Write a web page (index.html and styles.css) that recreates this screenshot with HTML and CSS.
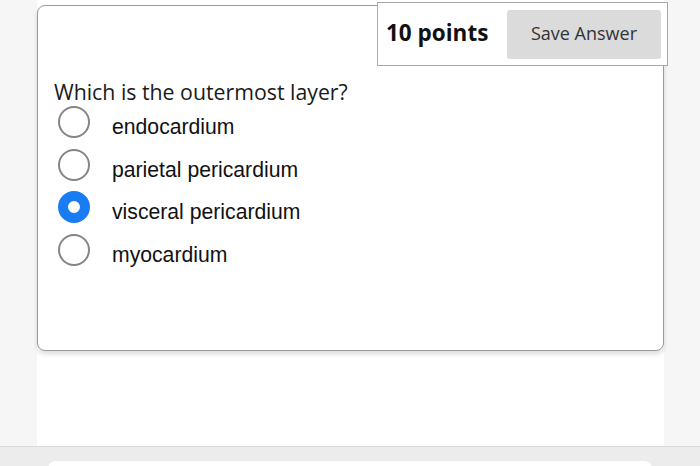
FILE: index.html
```html
<!DOCTYPE html>
<html>
<head>
<meta charset="utf-8">
<link rel="stylesheet" href="styles.css">
</head>
<body>
<div class="page">
  <div class="column">
    <div class="card">
      <div class="points-box">
        <span class="points">10 points</span>
        <button class="save">Save Answer</button>
      </div>
      <p class="question">Which is the outermost layer?</p>
      <ul class="options">
        <li class="option"><span class="radio"></span><span class="label">endocardium</span></li>
        <li class="option"><span class="radio"></span><span class="label">parietal pericardium</span></li>
        <li class="option"><span class="radio checked"></span><span class="label">visceral pericardium</span></li>
        <li class="option"><span class="radio"></span><span class="label">myocardium</span></li>
      </ul>
    </div>
  </div>
  <div class="bottom-bar"><div class="tab"></div></div>
</div>
</body>
</html>
```
FILE: styles.css
```css
html, body {
  margin: 0;
  padding: 0;
}
body {
  background: #f6f6f6;
  width: 700px;
  height: 466px;
  overflow: hidden;
}
.page {
  display: flex;
  flex-direction: column;
  height: 466px;
}
.column {
  margin-left: 37px;
  width: 627px;
  height: 447px;
  background: #ffffff;
  padding-top: 5px;
  box-sizing: border-box;
}
.card {
  position: relative;
  height: 346px;
  box-sizing: border-box;
  border: 1.5px solid #9a9a9a;
  border-radius: 8px;
  background: #fff;
  box-shadow: 0 3px 5px rgba(0,0,0,0.14);
  padding: 72px 0 0 16px;
}
.points-box {
  position: absolute;
  top: -4px;
  right: -5px;
  width: 291px;
  height: 64px;
  box-sizing: border-box;
  border: 1.5px solid #a8a8a8;
  background: #fff;
  display: flex;
  align-items: center;
  padding: 0 6px 0 8px;
  justify-content: space-between;
}
.points {
  font-family: "Open Sans", sans-serif;
  font-weight: 700;
  font-size: 22.5px;
  color: #111;
  margin-bottom: 4px;
}
.save {
  width: 154px;
  height: 49px;
  border: none;
  border-radius: 3px;
  background: #dbdbdb;
  font-family: "Open Sans", sans-serif;
  font-size: 18px;
  color: #333;
  padding: 0 0 3px 0;
}
.question {
  margin: 0;
  font-family: "Open Sans", sans-serif;
  font-size: 21.3px;
  line-height: 28px;
  color: #1a1a1a;
}
.options {
  list-style: none;
  margin: 0;
  padding: 0 0 0 4px;
}
.option {
  display: flex;
  align-items: center;
  height: 42.5px;
  gap: 22px;
}
.radio {
  width: 32px;
  height: 32px;
  box-sizing: border-box;
  border: 2.8px solid #858585;
  border-radius: 50%;
  background: #fff;
  flex: none;
  margin-bottom: 10px;
}
.radio.checked {
  border: 10px solid #1a7cf3;
}
.label {
  font-family: "Liberation Sans", Arial, sans-serif;
  font-size: 21.2px;
  color: #111;
}
.bottom-bar {
  height: 19px;
  background: #ececec;
  border-top: 1.5px solid #dadada;
  position: relative;
  overflow: hidden;
}
.tab {
  position: absolute;
  left: 48px;
  right: 48px;
  top: 14px;
  height: 20px;
  background: #fff;
  border-radius: 8px 8px 0 0;
}
```
